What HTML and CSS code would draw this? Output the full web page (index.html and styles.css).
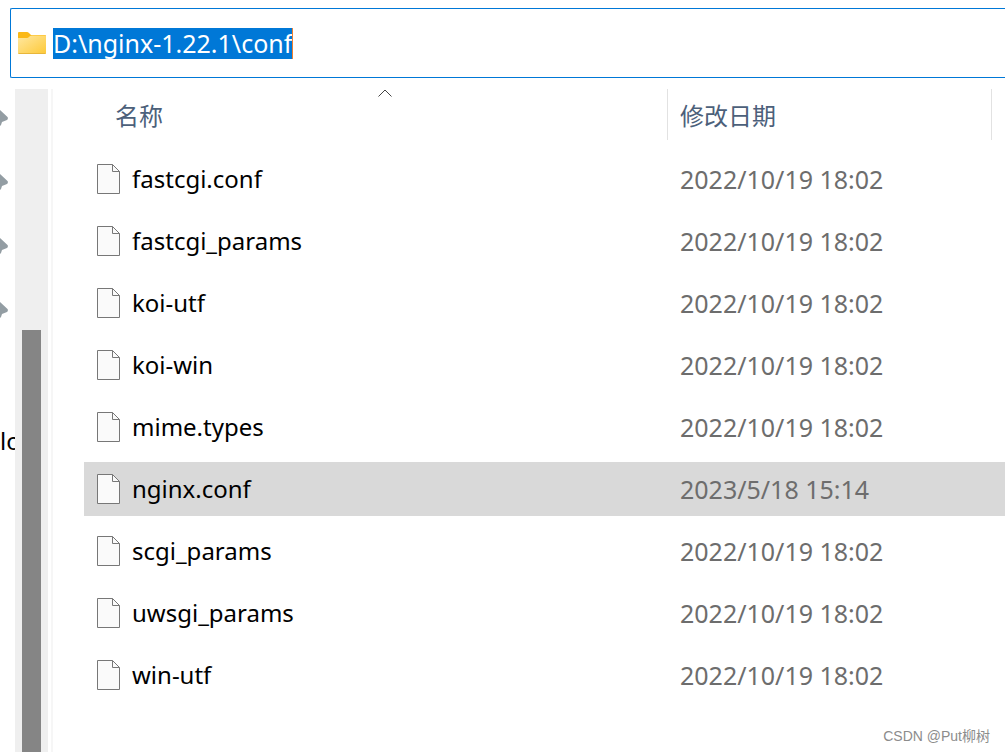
FILE: index.html
```html
<!DOCTYPE html>
<html lang="zh-CN">
<head>
  <meta charset="utf-8">
  <title>conf</title>
  <link rel="stylesheet" href="styles.css">
</head>
<body>
  <svg class="symbols" aria-hidden="true">
    <symbol id="file" viewBox="0 0 24 30">
      <path d="M1.500 .5H16.500L23.500 7.500V29.500H1.500Z" fill="#fafafa" stroke="#777"/>
      <path d="M16.500 .5V7.500H23.500" fill="none" stroke="#777"/>
    </symbol>
    <symbol id="pin" viewBox="0 0 8 24">
      <path d="M0 1L7.500 8Q8.500 9.500 7 11L2 13L1 16L0 17Z" fill="#939da3"/>
    </symbol>
  </svg>

  <header class="address-bar">
    <svg class="folder" viewBox="0 0 28 22" aria-hidden="true">
      <defs>
        <linearGradient id="folderFront" x1="0" y1="0" x2="1" y2="1">
          <stop offset="0" stop-color="#ffe8a2"/>
          <stop offset="1" stop-color="#fdc937"/>
        </linearGradient>
      </defs>
      <path d="M0 1Q0 0 1 0H9Q10 0 11 1L13 3H27Q28 3 28 4V12H0Z" fill="#fbb917"/>
      <path d="M0 6H9Q10 6 11 5L12 4Q13 3.500 14 3.500H27Q28 3.500 28 4.500V21Q28 22 27 22H1Q0 22 0 21Z" fill="url(#folderFront)"/>
      <path d="M.5 21.500H27.500" stroke="#e8b63a"/>
    </svg>
    <input class="path" type="text" value="D:\nginx-1.22.1\conf" aria-label="地址" spellcheck="false">
  </header>

  <div class="explorer">
    <nav class="sidebar">
      <div class="nav-item"><svg class="pin"><use href="#pin"/></svg></div>
      <div class="nav-item"><svg class="pin"><use href="#pin"/></svg></div>
      <div class="nav-item"><svg class="pin"><use href="#pin"/></svg></div>
      <div class="nav-item"><svg class="pin"><use href="#pin"/></svg></div>
      <div class="nav-item"></div>
      <div class="nav-item">lo</div>
    </nav>
    <div class="scrollbar"><div class="thumb"></div></div>
    <main class="content">
      <table class="files">
        <thead>
          <tr>
            <th class="name">
              <div class="heading">名称
                <svg class="sort" viewBox="0 0 14 8" aria-hidden="true"><path d="M.5 7.500L7 1L13.500 7.500" fill="none" stroke="#444"/></svg>
              </div>
            </th>
            <th class="date"><div class="heading">修改日期</div></th>
            <th class="type"><div class="heading"></div></th>
          </tr>
        </thead>
        <tbody>
          <tr><td><div class="file"><svg class="icon"><use href="#file"/></svg>fastcgi.conf</div></td><td class="modified">2022/10/19 18:02</td><td></td></tr>
          <tr><td><div class="file"><svg class="icon"><use href="#file"/></svg>fastcgi_params</div></td><td class="modified">2022/10/19 18:02</td><td></td></tr>
          <tr><td><div class="file"><svg class="icon"><use href="#file"/></svg>koi-utf</div></td><td class="modified">2022/10/19 18:02</td><td></td></tr>
          <tr><td><div class="file"><svg class="icon"><use href="#file"/></svg>koi-win</div></td><td class="modified">2022/10/19 18:02</td><td></td></tr>
          <tr><td><div class="file"><svg class="icon"><use href="#file"/></svg>mime.types</div></td><td class="modified">2022/10/19 18:02</td><td></td></tr>
          <tr class="selected"><td><div class="file"><svg class="icon"><use href="#file"/></svg>nginx.conf</div></td><td class="modified">2023/5/18 15:14</td><td></td></tr>
          <tr><td><div class="file"><svg class="icon"><use href="#file"/></svg>scgi_params</div></td><td class="modified">2022/10/19 18:02</td><td></td></tr>
          <tr><td><div class="file"><svg class="icon"><use href="#file"/></svg>uwsgi_params</div></td><td class="modified">2022/10/19 18:02</td><td></td></tr>
          <tr><td><div class="file"><svg class="icon"><use href="#file"/></svg>win-utf</div></td><td class="modified">2022/10/19 18:02</td><td></td></tr>
        </tbody>
      </table>
    </main>
  </div>

  <div class="watermark">CSDN @Put柳树</div>
</body>
</html>
```

FILE: styles.css
```css
* {
  box-sizing: border-box;
}

body {
  position: relative;
  display: flex;
  flex-direction: column;
  min-height: 100vh;
  margin: 0;
  background-color: #fff;
  color: #000;
  font-family: "Noto Sans", "Noto Sans CJK SC", sans-serif;
  font-size: 25px;
  line-height: 32px;
  overflow: hidden;
}

.symbols {
  position: absolute;
  width: 0;
  height: 0;
}

.address-bar {
  display: flex;
  align-items: center;
  gap: 7px;
  height: 70px;
  margin: 8px 0 11px 10px;
  padding-left: 7px;
  border: 1px solid #0078d7;
  border-right: none;
  border-radius: 2px 0 0 2px;
}

.folder {
  width: 28px;
  height: 22px;
}

.path {
  field-sizing: content;
  height: 31px;
  padding: 0;
  border: none;
  border-right: 1px solid #f08030;
  background-color: #0078d7;
  color: #fff;
  font: inherit;
  outline: none;
}

.explorer {
  display: flex;
  flex: 1;
}

.sidebar {
  width: 15px;
  overflow: hidden;
}

.nav-item {
  display: flex;
  align-items: center;
  height: 64px;
  font-size: 24px;
}

.pin {
  width: 8px;
  height: 24px;
}

.scrollbar {
  width: 33px;
  padding: 241px 7px 0;
  background-color: #efefef;
  display: flex;
}

.thumb {
  flex: 1;
  background-color: #858585;
}

.content {
  flex: 1;
  margin-left: 3px;
  padding-left: 31px;
  border-left: 2px solid #f6f6f6;
}

.files {
  width: 100%;
  table-layout: fixed;
  border-spacing: 0;
}

th,
td {
  padding: 0;
  text-align: left;
  font-weight: normal;
}

th {
  height: 59px;
  vertical-align: top;
  color: #4c607a;
  font-size: 24px;
}

.date {
  width: 324px;
}

.type {
  width: 14px;
}

.heading {
  position: relative;
  height: 51px;
  padding: 11px 0 0 12px;
  border-left: 1px solid #e2e2e2;
}

.name .heading {
  margin-left: 18px;
  border-left-color: transparent;
}

.sort {
  position: absolute;
  top: 0;
  left: 50%;
  width: 14px;
  height: 8px;
  margin-left: -7px;
}

td {
  height: 62px;
  border: solid transparent;
  border-width: 4px 0;
  background-clip: padding-box;
}

.file {
  display: flex;
  align-items: center;
  gap: 12px;
  padding-left: 12px;
  font-size: 24px;
}

.icon {
  width: 24px;
  height: 30px;
}

.modified {
  padding-left: 13px;
  color: #6d6d6d;
}

.selected td {
  background-color: #d9d9d9;
}

.watermark {
  position: absolute;
  right: 15px;
  bottom: 6px;
  color: #8c8c8c;
  font-family: "Liberation Sans", "Noto Sans CJK SC", sans-serif;
  font-size: 14px;
  line-height: 20px;
}
```
